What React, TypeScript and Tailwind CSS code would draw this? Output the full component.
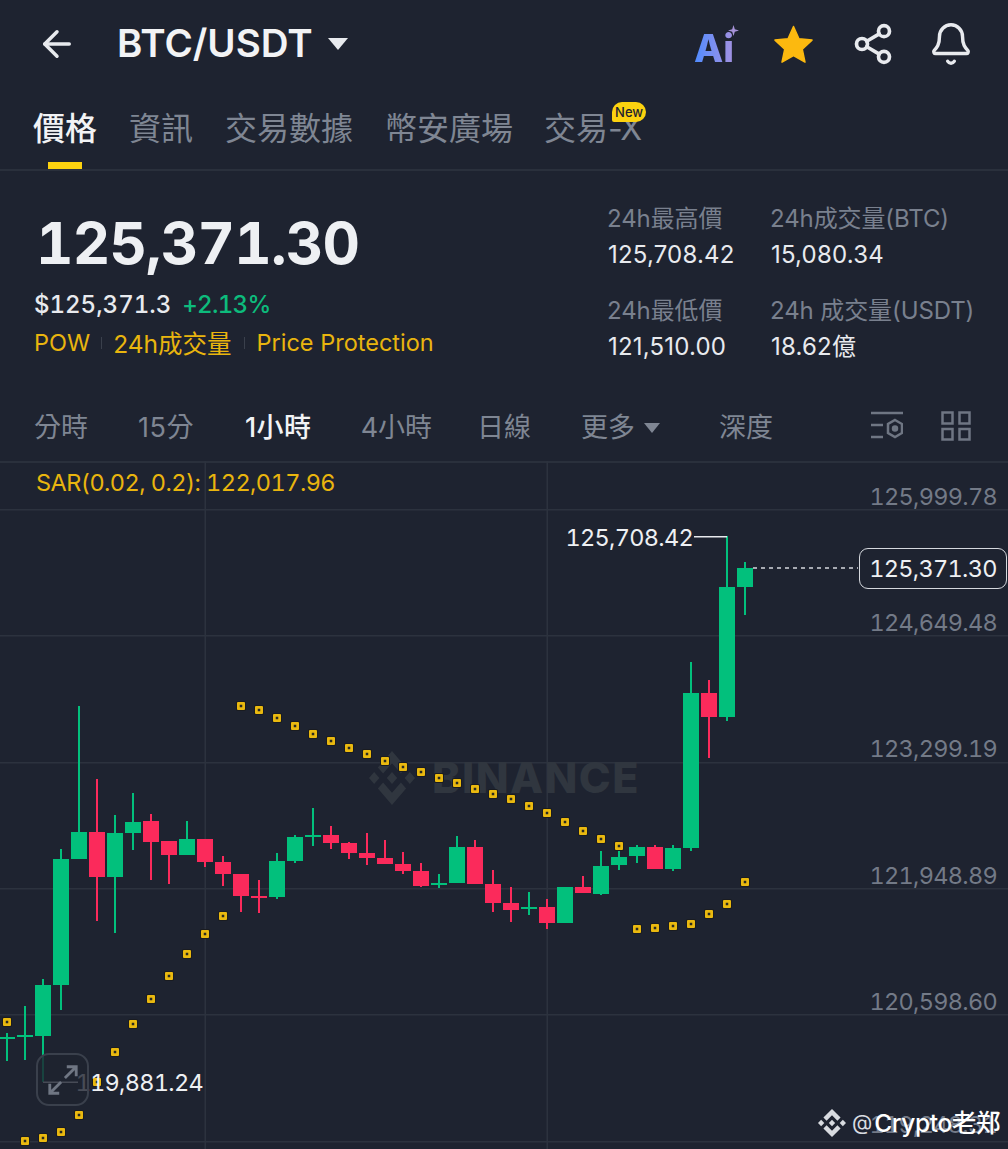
import { ArrowLeft, Bell, Share2 } from 'lucide-react';

const UP = '#02c07c';
const DOWN = '#fb2a5b';

// x centre, high, body top, body bottom, low, colour
const candles: [number, number, number, number, number, string][] = [
  [7, 1033, 1037, 1039, 1061, UP],
  [25, 1006, 1035, 1037, 1060, UP],
  [43, 979, 985, 1036, 1082, UP],
  [61, 849, 859, 985, 1010, UP],
  [79, 706, 832, 859, 859, UP],
  [97, 779, 832, 877, 921, DOWN],
  [115, 815, 833, 877, 933, UP],
  [133, 793, 822, 833, 850, UP],
  [151, 814, 821, 842, 880, DOWN],
  [169, 841, 841, 855, 884, DOWN],
  [187, 821, 839, 855, 855, UP],
  [205, 839, 839, 862, 867, DOWN],
  [223, 856, 862, 874, 886, DOWN],
  [241, 874, 874, 896, 912, DOWN],
  [259, 880, 896, 898, 913, DOWN],
  [277, 853, 861, 897, 899, UP],
  [295, 835, 837, 861, 863, UP],
  [313, 808, 835, 837, 846, UP],
  [331, 826, 835, 843, 849, DOWN],
  [349, 842, 843, 853, 859, DOWN],
  [367, 833, 853, 858, 865, DOWN],
  [385, 840, 858, 864, 864, DOWN],
  [403, 852, 864, 871, 874, DOWN],
  [421, 863, 871, 886, 887, DOWN],
  [439, 874, 883, 885, 888, UP],
  [457, 836, 847, 883, 883, UP],
  [475, 840, 847, 884, 884, DOWN],
  [493, 870, 884, 903, 912, DOWN],
  [511, 887, 903, 910, 922, DOWN],
  [529, 892, 907, 909, 915, UP],
  [547, 899, 907, 923, 929, DOWN],
  [565, 887, 887, 923, 923, UP],
  [583, 876, 887, 893, 893, DOWN],
  [601, 851, 866, 894, 895, UP],
  [619, 850, 857, 865, 870, UP],
  [637, 845, 847, 856, 863, UP],
  [655, 845, 847, 869, 869, DOWN],
  [673, 845, 848, 869, 871, UP],
  [691, 662, 693, 848, 851, UP],
  [709, 680, 693, 717, 758, DOWN],
  [727, 536, 587, 717, 721, UP],
  [745, 562, 568, 587, 615, UP],
];

const sar: [number, number][] = [
  [7, 1022], [25, 1141], [43, 1138], [61, 1132], [79, 1115], [97, 1082], [115, 1052], [133, 1024],
  [151, 999], [169, 976], [187, 954], [205, 934], [223, 916], [241, 706], [259, 710], [277, 718],
  [295, 726], [313, 734], [331, 741], [349, 748], [367, 754], [385, 761], [403, 767], [421, 772],
  [439, 778], [457, 783], [475, 789], [493, 794], [511, 799], [529, 806], [547, 813], [565, 822],
  [583, 831], [601, 839], [619, 846], [637, 929], [655, 928], [673, 926], [691, 924], [709, 914],
  [727, 904], [745, 882],
];

const gridY = [509, 635, 762, 888, 1014, 1141];

const axisLabels: [string, number][] = [
  ['125,999.78', 505],
  ['124,649.48', 631],
  ['123,299.19', 757],
  ['121,948.89', 884],
  ['120,598.60', 1010],
  ['119,248.31', 1133],
];

function BinanceMark({ className, fill }: { className: string; fill: string }) {
  return (
    <svg viewBox="0 0 32 32" className={className} fill={fill}>
      <path d="M9.8 13.4 16 7.2l6.2 6.2 3.6-3.6L16 0 6.2 9.8l3.6 3.6Z" />
      <path d="M0 16l3.6-3.6L7.2 16l-3.6 3.6L0 16Z" />
      <path d="M9.8 18.6 16 24.8l6.2-6.2 3.6 3.6L16 32l-9.8-9.8 3.6-3.6Z" />
      <path d="M24.8 16l3.6-3.6L32 16l-3.6 3.6-3.6-3.6Z" />
      <path d="M19.6 16 16 12.4 12.4 16l3.6 3.6 3.6-3.6Z" />
    </svg>
  );
}

function Stat({ label, value }: { label: string; value: string }) {
  return (
    <div className="flex flex-col">
      <span className="h-[36px] text-[24px] leading-[36px] tracking-[-0.1px] text-[#79808e]">{label}</span>
      <span className="h-[37px] pl-[1px] text-[24px] leading-[36px] tracking-[0.2px] text-[#e8eaee]">{value}</span>
    </div>
  );
}

function Chart() {
  return (
    <div className="relative h-[688px] overflow-hidden tabular-nums">
      <svg viewBox="0 461 1008 688" className="block h-[688px] w-[1008px]">
        <rect x="0" y="461" width="1008" height="2" fill="#2a303c" />
        {gridY.map((y) => (
          <rect key={y} x="0" y={y} width="1008" height="1.5" fill="#2c323e" />
        ))}
        <rect x="204.5" y="461" width="1.5" height="688" fill="#2c323e" />
        <rect x="546.5" y="461" width="1.5" height="688" fill="#2c323e" />

        <svg x="369" y="751" width="46" height="54" viewBox="0 0 32 32" preserveAspectRatio="none" fill="#30363f">
          <path d="M9.8 13.4 16 7.2l6.2 6.2 3.6-3.6L16 0 6.2 9.8l3.6 3.6Z" />
          <path d="M0 16l3.6-3.6L7.2 16l-3.6 3.6L0 16Z" />
          <path d="M9.8 18.6 16 24.8l6.2-6.2 3.6 3.6L16 32l-9.8-9.8 3.6-3.6Z" />
          <path d="M24.8 16l3.6-3.6L32 16l-3.6 3.6-3.6-3.6Z" />
          <path d="M19.6 16 16 12.4 12.4 16l3.6 3.6 3.6-3.6Z" />
        </svg>
        <text x="432" y="793" fontSize="43" fontWeight="800" letterSpacing="1.4" fill="#30363f">
          BINANCE
        </text>

        {axisLabels.map(([label, y]) => (
          <text key={label} x="997" y={y} fontSize="23.5" textAnchor="end" letterSpacing="-0.7" fill="#737a87">
            {label}
          </text>
        ))}

        {candles.map(([x, high, top, bottom, low, color]) => (
          <g key={x} fill={color}>
            <rect x={x - 1} y={high} width="2" height={low - high} />
            <rect x={x - 8} y={top} width="16" height={bottom - top} />
          </g>
        ))}

        {sar.map(([x, y]) => (
          <g key={x}>
            <rect x={x - 5} y={y - 5} width="10" height="10" rx="2" fill="#1a1c20" />
            <rect x={x - 4} y={y - 4} width="8" height="8" rx="1" fill="#eab90f" />
            <rect x={x - 1.25} y={y - 1.25} width="2.5" height="2.5" fill="#2a2a20" />
          </g>
        ))}

        <rect x="694" y="536" width="33" height="1.5" fill="#e8eaee" />
        <text x="693" y="546" fontSize="23.5" textAnchor="end" letterSpacing="-0.7" fill="#eef0f3">
          125,708.42
        </text>
        <rect x="43" y="1081.5" width="35" height="1.5" fill="#e8eaee" />
        <text x="203" y="1091" fontSize="23.5" textAnchor="end" letterSpacing="-0.7" fill="#eef0f3">
          119,881.24
        </text>
        <line x1="753" y1="568" x2="858" y2="568" stroke="#d5d8dd" strokeWidth="1.5" strokeDasharray="4 4" />
      </svg>

      <div className="absolute left-[36px] top-[8px] text-[23.5px] leading-[28px] tracking-[-0.55px] text-[#e9b50e]">
        SAR(0.02, 0.2): 122,017.96
      </div>

      <div className="absolute left-[859px] top-[87px] flex h-[41px] w-[148px] items-center justify-center rounded-[9px] border border-[#d5d8dd] bg-[#1e2330] text-[23.5px] tracking-[-0.7px] text-[#eef0f3]">
        125,371.30
      </div>

      <div className="absolute left-[36px] top-[592px] flex h-[53px] w-[53px] items-center justify-center rounded-[13px] border-2 border-[#3a404c] bg-[#1e2330]/80">
        <svg viewBox="0 0 36 36" className="h-[34px] w-[34px]" fill="none" stroke="#6f7683" strokeWidth="3">
          <path d="M20 16 32 4M22 4h10v10" />
          <path d="M16 20 4 32M14 32H4V22" />
        </svg>
      </div>

      <div className="absolute left-[818px] top-[648px] flex items-center whitespace-nowrap text-[24.5px] leading-[28px]">
        <BinanceMark className="h-[28px] w-[28px]" fill="#d8dbe0" />
        <span className="ml-[6px] text-[21px] text-[#d8dbe0]">@</span>
        <span className="ml-[2px] font-medium tracking-[-0.4px] text-white">Crypto老郑</span>
      </div>
    </div>
  );
}

export default function App() {
  return (
    <div className="h-[1149px] w-[1008px] overflow-hidden bg-[#1e2330] [font-family:Inter,'Noto_Sans_CJK_TC',sans-serif]">
      <header className="flex h-[88px] items-center pl-[36px] pr-[34px]">
        <ArrowLeft className="h-[42px] w-[42px] text-[#e8eaee]" strokeWidth={2} />
        <span className="ml-[39px] text-[38.5px] font-semibold text-[#f2f3f5]">BTC/USDT</span>
        <svg viewBox="0 0 20 12" className="ml-[15px] h-[12px] w-[20px]" fill="#e8eaee">
          <path d="M0 0h20L10 12Z" />
        </svg>
        <div className="ml-auto flex items-center">
          <span className="relative mt-[8px] bg-gradient-to-r from-[#4c8bff] to-[#ab91dd] bg-clip-text pr-[5px] text-[38px] font-extrabold leading-none text-transparent">
            Ai
            <svg viewBox="0 0 10 10" className="absolute right-0 top-[-4px] h-[11px] w-[11px]" fill="#a793d8">
              <path d="M5 0 6.2 3.8 10 5 6.2 6.2 5 10 3.8 6.2 0 5 3.8 3.8Z" />
            </svg>
          </span>
          <svg viewBox="0 0 40 38" className="ml-[35px] h-[38px] w-[39px]" fill="#fcb90f">
            <path
              d="M20 1 25.6 13.6 39 15 29 24.3 31.8 37.6 20 30.8 8.2 37.6 11 24.3 1 15 14.4 13.6Z"
              stroke="#fcb90f"
              strokeLinejoin="round"
              strokeWidth="1.5"
            />
          </svg>
          <Share2 className="ml-[38px] h-[44px] w-[44px] text-[#e8eaee]" strokeWidth={2} />
          <Bell className="ml-[33px] h-[46px] w-[46px] text-[#e8eaee]" strokeWidth={1.8} />
        </div>
      </header>

      <nav className="flex h-[83px] gap-[32px] border-b-2 border-[#2a303c] pl-[33px] text-[32px] leading-[82px] text-[#7f8693]">
        <span className="relative font-medium text-[#f2f3f5]">
          價格
          <span className="absolute bottom-0 left-[15px] h-[7px] w-[34px] bg-[#fcd20f]" />
        </span>
        <span>資訊</span>
        <span>交易數據</span>
        <span>幣安廣場</span>
        <span className="relative ml-[-1px]">
          交易<span className="tracking-[-2.5px]">-X</span>
          <span className="absolute left-[68px] top-[14px] flex h-[20px] w-[34px] items-center justify-center rounded-[10px] rounded-bl-[2px] bg-[#fcd20f] text-[13px] font-medium leading-none text-[#1e2330]">
            New
          </span>
        </span>
      </nav>

      <section className="flex h-[229px] pt-[30px]">
        <div className="w-[607px] pl-[34px]">
          <div className="pl-[2px] text-[58px] font-bold leading-[84px] tracking-[-0.8px] text-[#eef0f3] tabular-nums">
            125,371.30
          </div>
          <div className="flex h-[40px] items-center gap-[11px] text-[24px] tabular-nums">
            <span className="font-medium text-[#e8eaee]">$125,371.3</span>
            <span className="font-medium tracking-[-0.7px] text-[#0dbb7c]">+2.13%</span>
          </div>
          <div className="flex h-[36px] items-center text-[23.5px] text-[#e9b50e]">
            <span>POW</span>
            <span className="mx-[11px] h-[12px] w-[1px] bg-[#3a404c]" />
            <span className="mt-[3px] text-[24.5px]">24h成交量</span>
            <span className="mx-[12px] h-[12px] w-[1px] bg-[#3a404c]" />
            <span>Price Protection</span>
          </div>
        </div>
        <div className="flex flex-col gap-[19px]">
          <div className="flex">
            <div className="w-[163px]">
              <Stat label="24h最高價" value="125,708.42" />
            </div>
            <Stat label="24h成交量(BTC)" value="15,080.34" />
          </div>
          <div className="flex">
            <div className="w-[163px]">
              <Stat label="24h最低價" value="121,510.00" />
            </div>
            <Stat label="24h 成交量(USDT)" value="18.62億" />
          </div>
        </div>
      </section>

      <div className="flex h-[61px] items-center pb-[5px] pl-[34px] text-[27px] text-[#7f8693]">
        <span>分時</span>
        <span className="ml-[50px] tracking-[0.5px]">15分</span>
        <span className="ml-[51px] font-medium tracking-[0.5px] text-[#f2f3f5]">1小時</span>
        <span className="ml-[49px]">4小時</span>
        <span className="ml-[45px]">日線</span>
        <span className="ml-[50px]">更多</span>
        <svg viewBox="0 0 16 10" className="ml-[9px] h-[10px] w-[16px]" fill="#7f8693">
          <path d="M0 0h16L8 10Z" />
        </svg>
        <span className="ml-[59px]">深度</span>
        <svg viewBox="0 0 32 30" className="ml-[98px] mt-[-4px] h-[30px] w-[32px]" fill="none" stroke="#6f7683" strokeWidth="2.5">
          <path d="M0 2h32M0 14h12M0 26h12" />
          <path d="M24 9l7 4v9l-7 4-7-4v-9Z" />
          <circle cx="24" cy="17.5" r="2" fill="#6f7683" />
        </svg>
        <svg viewBox="0 0 30 30" className="ml-[38px] mt-[-4px] h-[30px] w-[30px]" fill="none" stroke="#6f7683" strokeWidth="2.5">
          <rect x="1.5" y="1.5" width="10" height="11" />
          <rect x="18.5" y="1.5" width="10" height="11" />
          <rect x="1.5" y="18" width="10" height="10.5" />
          <rect x="18.5" y="18" width="10" height="10.5" />
        </svg>
      </div>

      <Chart />
    </div>
  );
}
